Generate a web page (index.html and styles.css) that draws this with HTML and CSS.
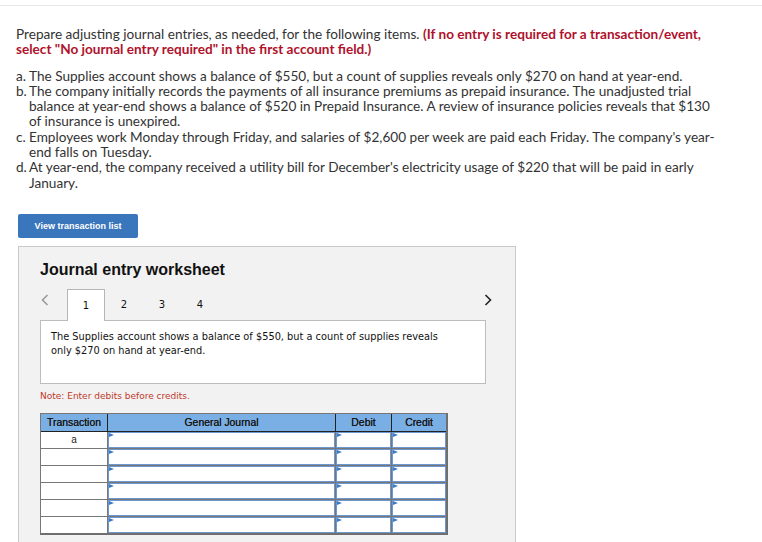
FILE: index.html
```html
<!DOCTYPE html>
<html lang="en">
<head>
<meta charset="utf-8">
<title>Journal entry worksheet</title>
<link rel="stylesheet" href="styles.css">
</head>
<body>
<div class="topbar"></div>
<main class="content">
  <p class="intro">Prepare adjusting journal entries, as needed, for the following items. <strong class="req">(If no entry is required for a transaction/event,<br>select "No journal entry required" in the first account field.)</strong></p>
  <ol class="items">
    <li><span class="lbl">a.</span><span>The Supplies account shows a balance of $550, but a count of supplies reveals only $270 on hand at year-end.</span></li>
    <li><span class="lbl">b.</span><span>The company initially records the payments of all insurance premiums as prepaid insurance. The unadjusted trial<br>balance at year-end shows a balance of $520 in Prepaid Insurance. A review of insurance policies reveals that $130<br>of insurance is unexpired.</span></li>
    <li><span class="lbl">c.</span><span>Employees work Monday through Friday, and salaries of $2,600 per week are paid each Friday. The company's year-<br>end falls on Tuesday.</span></li>
    <li><span class="lbl">d.</span><span>At year-end, the company received a utility bill for December's electricity usage of $220 that will be paid in early<br>January.</span></li>
  </ol>
  <button class="btn" type="button">View transaction list</button>

  <section class="panel">
    <h2 class="panel-title">Journal entry worksheet</h2>
    <div class="tabs">
      <span class="arrow prev"><svg width="8" height="12" viewBox="0 0 8 12"><path d="M6.5 1 L1.5 6 L6.5 11" fill="none" stroke="#9a9a9a" stroke-width="1.6"/></svg></span>
      <span class="tab active">1</span>
      <span class="tab">2</span>
      <span class="tab">3</span>
      <span class="tab">4</span>
      <span class="spacer"></span>
      <span class="arrow next"><svg width="8" height="12" viewBox="0 0 8 12"><path d="M1.5 1 L6.5 6 L1.5 11" fill="none" stroke="#222" stroke-width="1.6"/></svg></span>
    </div>
    <div class="desc">The Supplies account shows a balance of $550, but a count of supplies reveals<br>only $270 on hand at year-end.</div>
    <p class="note">Note: Enter debits before credits.</p>
    <table class="journal">
      <thead>
        <tr><th class="c-tr">Transaction</th><th class="c-gj">General Journal</th><th class="c-deb">Debit</th><th class="c-cred">Credit</th></tr>
      </thead>
      <tbody>
        <tr><td class="tr">a</td><td class="in"><div class="field"></div></td><td class="in"><div class="field"></div></td><td class="in"><div class="field"></div></td></tr>
        <tr><td class="tr"></td><td class="in"><div class="field"></div></td><td class="in"><div class="field"></div></td><td class="in"><div class="field"></div></td></tr>
        <tr><td class="tr"></td><td class="in"><div class="field"></div></td><td class="in"><div class="field"></div></td><td class="in"><div class="field"></div></td></tr>
        <tr><td class="tr"></td><td class="in"><div class="field"></div></td><td class="in"><div class="field"></div></td><td class="in"><div class="field"></div></td></tr>
        <tr><td class="tr"></td><td class="in"><div class="field"></div></td><td class="in"><div class="field"></div></td><td class="in"><div class="field"></div></td></tr>
        <tr><td class="tr"></td><td class="in"><div class="field"></div></td><td class="in"><div class="field"></div></td><td class="in"><div class="field"></div></td></tr>
      </tbody>
    </table>
  </section>
</main>
</body>
</html>
```

FILE: styles.css
```css
html, body {
  margin: 0;
  padding: 0;
  background: #ffffff;
}

body {
  width: 762px;
  height: 542px;
  overflow: hidden;
  font-family: "Lato", "Liberation Sans", sans-serif;
  color: #333333;
}

.topbar {
  height: 5px;
  border-bottom: 1px solid #e8e8e8;
}

.content {
  padding: 0 16px;
}

.intro {
  margin: 21px 0 0;
  font-size: 13.6px;
  line-height: 15.3px;
  color: #333;
  white-space: nowrap;
}

.req {
  color: #b0122c;
  font-weight: 700;
}

.items {
  list-style: none;
  margin: 11px 0 0;
  padding: 0;
  font-size: 13.6px;
  line-height: 15.3px;
  color: #333;
  white-space: nowrap;
}

.items li {
  display: flex;
}

.items .lbl {
  width: 13px;
  flex: none;
}

.btn {
  display: block;
  margin: 23px 0 0 2px;
  width: 120px;
  height: 24px;
  padding: 0;
  border: none;
  border-radius: 2px;
  background: #3a76bb;
  color: #ffffff;
  font-family: "Liberation Sans", Arial, sans-serif;
  font-weight: 700;
  font-size: 9px;
}

.panel {
  margin: 8px 0 0 2px;
  width: 498px;
  box-sizing: border-box;
  background: #f2f2f2;
  border: 1px solid #c9c9c9;
  padding: 13px 29px 20px 21px;
  font-family: "DejaVu Sans", Verdana, sans-serif;
  color: #111;
}

.panel-title {
  margin: 0;
  font-family: "Liberation Sans", Arial, sans-serif;
  font-size: 16px;
  line-height: 20px;
  font-weight: 700;
  color: #111;
}

.tabs {
  display: flex;
  align-items: stretch;
  margin-top: 9px;
  margin-right: -6px;
  height: 31px;
}

.arrow {
  display: flex;
  align-items: center;
  height: 22px;
}

.arrow.prev {
  width: 26px;
  padding-left: 1px;
}

.spacer {
  flex: 1;
}

.tab {
  width: 38px;
  box-sizing: border-box;
  display: flex;
  justify-content: center;
  align-items: center;
  font-size: 10px;
  color: #111;
  border: 1px solid transparent;
  border-bottom: none;
}

.tab.active {
  background: #ffffff;
  border-color: #b5b5b5;
  position: relative;
  z-index: 1;
  margin-bottom: -1px;
  height: 32px;
}

.desc {
  background: #ffffff;
  border: 1px solid #bdbdbd;
  height: 64px;
  box-sizing: border-box;
  padding: 9px 10px;
  font-size: 9.8px;
  line-height: 14px;
  color: #111;
}

.note {
  margin: 6px 0 0;
  font-size: 9px;
  line-height: 12px;
  color: #c0392b;
}

.journal {
  margin-top: 11px;
  border-collapse: separate;
  border-spacing: 0;
  table-layout: fixed;
  width: 408px;
  font-family: "Liberation Sans", Arial, sans-serif;
  border-top: 1px solid #777777;
  border-left: 1px solid #777777;
  border-right: 2px solid #6f6f6f;
  border-bottom: 2px solid #6f6f6f;
}

.journal th,
.journal td {
  box-sizing: border-box;
  padding: 0;
}

.c-tr { width: 67px; }
.c-gj { width: 228px; }
.c-deb { width: 56px; }
.c-cred { width: 54px; }

.journal th {
  height: 18px;
  background: #7aafe6;
  font-size: 10.4px;
  font-weight: 400;
  color: #1a1a1a;
  border-right: 1px solid #222;
  border-bottom: 1px solid #222;
  text-shadow: 0 0 0.4px #1a1a1a;
}

.journal th:last-child {
  border-right: none;
}

.journal td {
  height: 17px;
  background: #ffffff;
  border-right: 1px solid #777777;
  border-bottom: 1px solid #777777;
}

.journal td:last-child {
  border-right: none;
}

.journal tbody tr:last-child td {
  border-bottom: none;
  height: 16px;
}

.journal td.tr {
  text-align: center;
  font-size: 10px;
  color: #222;
  vertical-align: middle;
}

.journal td.in {
  vertical-align: top;
}

.field {
  position: relative;
  height: 16px;
  box-sizing: border-box;
  border: 1px solid #6c97cf;
  background: #ffffff;
}

.field::before {
  content: "";
  position: absolute;
  left: 0;
  top: 0;
  width: 0;
  height: 0;
  border-top: 2.5px solid transparent;
  border-bottom: 2.5px solid transparent;
  border-left: 5px solid #3d7ac4;
}
```
